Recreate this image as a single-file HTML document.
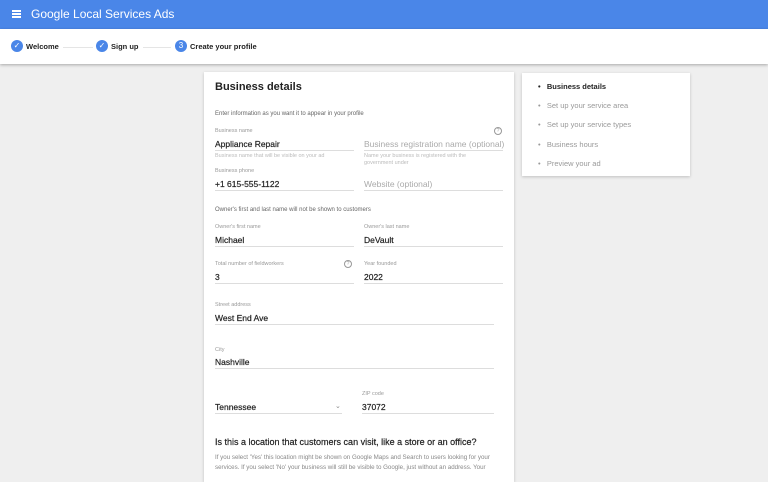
<!DOCTYPE html><html><head><style>
*{margin:0;padding:0;box-sizing:border-box}
body{width:768px;height:471px;overflow:hidden;background:#efefef;font-family:"Liberation Sans",sans-serif;position:relative;color:#222}
.a{position:absolute;white-space:nowrap}
.hdr{position:absolute;left:0;top:0;width:768px;height:29px;background:#4a86e8}
.stp{position:absolute;left:0;top:29px;width:768px;height:35px;background:#fff;box-shadow:0 1px 3px rgba(0,0,0,.3)}
.dot{position:absolute;width:12px;height:12px;border-radius:50%;background:#4a86e8;color:#fff;font-size:8px;text-align:center;line-height:12px}
.card{position:absolute;background:#fff;box-shadow:0 1px 3px rgba(0,0,0,.2)}
.lb{font-size:5.5px;color:#999}
.v{font-size:8.5px;color:#222;-webkit-text-stroke:0.2px #222}
.ph{font-size:8.5px;color:#aaa}
.ln{position:absolute;height:1px;background:#ddd}
.hl{font-size:5.5px;color:#bbb}
.q{position:absolute;width:8px;height:8px;border:1px solid #999;border-radius:50%;font-size:5px;color:#999;text-align:center;line-height:6px}
.side{font-size:7.5px;color:#999}
</style></head><body>
<div class="hdr">
<div class="a" style="left:12px;top:10px;width:9px;height:1.5px;background:#fff;box-shadow:0 3px 0 #fff,0 6px 0 #fff"></div>
<div class="a" style="left:31px;top:7px;font-size:12px;color:#fff">Google Local Services Ads</div>
</div>
<div class="stp">
<div class="dot" style="left:11px;top:11px">✓</div><div class="a" style="left:26px;top:13px;font-size:7.5px;font-weight:bold">Welcome</div>
<div class="ln" style="left:63px;top:18px;width:30px;background:#e5e5e5"></div>
<div class="dot" style="left:96px;top:11px">✓</div><div class="a" style="left:111px;top:13px;font-size:7.5px;font-weight:bold">Sign up</div>
<div class="ln" style="left:143px;top:18px;width:28px;background:#e5e5e5"></div>
<div class="dot" style="left:175px;top:11px">3</div><div class="a" style="left:190px;top:13px;font-size:7.5px;font-weight:bold">Create your profile</div>
</div>
<div class="card" style="left:204px;top:72px;width:310px;height:410px"></div>
<div class="a" style="left:215px;top:81px;font-size:11px;font-weight:bold">Business details</div>
<div class="a" style="left:215px;top:111px;font-size:6px;color:#666">Enter information as you want it to appear in your profile</div>
<div class="a lb" style="left:215px;top:128px">Business name</div>
<div class="q" style="left:494px;top:127px">?</div>
<div class="a v" style="left:215px;top:139px">Appliance Repair</div><div class="ln" style="left:215px;top:150px;width:139px"></div>
<div class="a ph" style="left:364px;top:139px">Business registration name (optional)</div><div class="ln" style="left:364px;top:150px;width:139px"></div>
<div class="a hl" style="left:215px;top:153px">Business name that will be visible on your ad</div>
<div class="a hl" style="left:364px;top:153px;line-height:7px">Name your business is registered with the<br>government under</div>
<div class="a lb" style="left:215px;top:168px">Business phone</div>
<div class="a v" style="left:215px;top:179px">+1 615-555-1122</div><div class="ln" style="left:215px;top:190px;width:139px"></div>
<div class="a ph" style="left:364px;top:179px">Website (optional)</div><div class="ln" style="left:364px;top:190px;width:139px"></div>
<div class="a" style="left:215px;top:207px;font-size:6px;color:#666">Owner's first and last name will not be shown to customers</div>
<div class="a lb" style="left:215px;top:224px">Owner's first name</div><div class="a lb" style="left:364px;top:224px">Owner's last name</div>
<div class="a v" style="left:215px;top:235px">Michael</div><div class="ln" style="left:215px;top:246px;width:139px"></div>
<div class="a v" style="left:364px;top:235px">DeVault</div><div class="ln" style="left:364px;top:246px;width:139px"></div>
<div class="a lb" style="left:215px;top:261px">Total number of fieldworkers</div><div class="q" style="left:344px;top:260px">?</div>
<div class="a lb" style="left:364px;top:261px">Year founded</div>
<div class="a v" style="left:215px;top:272px">3</div><div class="ln" style="left:215px;top:283px;width:139px"></div>
<div class="a v" style="left:364px;top:272px">2022</div><div class="ln" style="left:364px;top:283px;width:139px"></div>
<div class="a lb" style="left:215px;top:302px">Street address</div>
<div class="a v" style="left:215px;top:313px">West End Ave</div><div class="ln" style="left:215px;top:324px;width:279px"></div>
<div class="a lb" style="left:215px;top:347px">City</div>
<div class="a v" style="left:215px;top:357px">Nashville</div><div class="ln" style="left:215px;top:368px;width:279px"></div>
<div class="a lb" style="left:362px;top:391px">ZIP code</div>
<div class="a v" style="left:215px;top:402px">Tennessee</div><div class="a" style="left:335px;top:402px;font-size:7px;color:#888">⌄</div><div class="ln" style="left:215px;top:413px;width:127px"></div>
<div class="a v" style="left:362px;top:402px">37072</div><div class="ln" style="left:362px;top:413px;width:132px"></div>
<div class="a" style="left:215px;top:437px;font-size:9px;color:#222;-webkit-text-stroke:0.2px #222">Is this a location that customers can visit, like a store or an office?</div>
<div class="a" style="left:215px;top:453px;font-size:6.2px;color:#888;line-height:10px">If you select 'Yes' this location might be shown on Google Maps and Search to users looking for your<br>services. If you select 'No' your business will still be visible to Google, just without an address. Your</div>
<div class="card" style="left:522px;top:73px;width:168px;height:103px"></div>
<div class="a" style="left:538px;top:82px;font-size:7.5px;font-weight:bold">•&nbsp;&nbsp;&nbsp;Business details</div>
<div class="a side" style="left:538px;top:101px">•&nbsp;&nbsp;&nbsp;Set up your service area</div>
<div class="a side" style="left:538px;top:120px">•&nbsp;&nbsp;&nbsp;Set up your service types</div>
<div class="a side" style="left:538px;top:140px">•&nbsp;&nbsp;&nbsp;Business hours</div>
<div class="a side" style="left:538px;top:159px">•&nbsp;&nbsp;&nbsp;Preview your ad</div>
</body></html>
